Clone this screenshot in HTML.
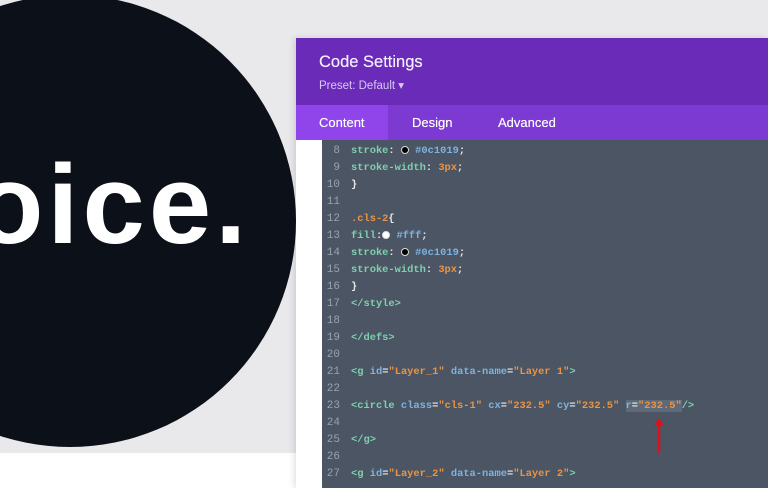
<!DOCTYPE html>
<html><head><meta charset="utf-8"><style>
*{margin:0;padding:0;box-sizing:border-box}
body{width:768px;height:488px;overflow:hidden;background:#fff;position:relative;font-family:"Liberation Sans",sans-serif}
.bg{position:absolute;left:0;top:0;width:768px;height:453px;background:#e9e9ec;overflow:hidden}
.circ{position:absolute;left:-156px;top:-5px;width:452px;height:452px;border-radius:50%;background:#0c1019}
.big{position:absolute;left:-25px;top:149px;font-size:112px;font-weight:bold;color:#fff;letter-spacing:4px;line-height:1}
.panel{position:absolute;left:296px;top:38px;width:472px;height:450px;background:#fff;box-shadow:-2px 0 6px rgba(0,0,0,.12)}
.hdr{height:67px;background:#6a2cb8;padding:14px 0 0 23px;color:#fff}
.hdr h1{font-size:16.5px;font-weight:normal;color:#f4eefc;margin-top:1px;text-shadow:0 0 .4px #fff}
.hdr p{font-size:11.5px;color:#d9c8f2;margin-top:6px}
.tabs{height:35px;background:#7d3ad2;display:flex;font-size:13px;color:#fff;text-shadow:0 0 .4px #fff}
.tabs div{line-height:35px}
.code{position:absolute;left:26px;top:102px;right:0;bottom:0;background:#4b5563;font-family:"Liberation Mono",monospace;font-weight:bold;font-size:10.4px}
.l{position:absolute;left:0;height:17px;line-height:17px;white-space:pre}
.n{position:absolute;width:18px;text-align:right;color:#9aa3ad;font-weight:normal;font-size:11px}
.c{position:absolute;left:29px;color:#e8e8e8}
.k{color:#7ed0b0}.v{color:#7fb3e0}.o{color:#eb9444}.t{color:#7ed0b0}.a{color:#7fb3e0}
.dot{display:inline-block;width:8px;height:8px;border-radius:50%;background:#000;border:1px solid #ddd;vertical-align:-1px}
</style></head><body>
<div class="bg"><div class="circ"></div><div class="big">oice.</div></div>
<div class="panel">
<div class="hdr"><h1>Code Settings</h1><p>Preset: Default ▾</p></div>
<div class="tabs"><div style="background:#8f45ea;width:92px;padding-left:23px">Content</div><div style="padding-left:24px;width:110px">Design</div><div>Advanced</div></div>
<div class="code">
<div class="l" style="top:3px"><span class="n">8</span><span class="c"><span class="k">stroke</span>: <span class="dot"></span> <span class="v">#0c1019</span>;</span></div>
<div class="l" style="top:20px"><span class="n">9</span><span class="c"><span class="k">stroke-width</span>: <span class="o">3px</span>;</span></div>
<div class="l" style="top:37px"><span class="n">10</span><span class="c">}</span></div>
<div class="l" style="top:54px"><span class="n">11</span></div>
<div class="l" style="top:71px"><span class="n">12</span><span class="c"><span class="o">.cls-2</span>{</span></div>
<div class="l" style="top:88px"><span class="n">13</span><span class="c"><span class="k">fill</span>:<span class="dot" style="background:#fff"></span> <span class="v">#fff</span>;</span></div>
<div class="l" style="top:105px"><span class="n">14</span><span class="c"><span class="k">stroke</span>: <span class="dot"></span> <span class="v">#0c1019</span>;</span></div>
<div class="l" style="top:122px"><span class="n">15</span><span class="c"><span class="k">stroke-width</span>: <span class="o">3px</span>;</span></div>
<div class="l" style="top:139px"><span class="n">16</span><span class="c">}</span></div>
<div class="l" style="top:156px"><span class="n">17</span><span class="c"><span class="t">&lt;/style&gt;</span></span></div>
<div class="l" style="top:173px"><span class="n">18</span></div>
<div class="l" style="top:190px"><span class="n">19</span><span class="c"><span class="t">&lt;/defs&gt;</span></span></div>
<div class="l" style="top:207px"><span class="n">20</span></div>
<div class="l" style="top:224px"><span class="n">21</span><span class="c"><span class="t">&lt;g</span> <span class="a">id</span>=<span class="o">"Layer_1"</span> <span class="a">data-name</span>=<span class="o">"Layer 1"</span><span class="t">&gt;</span></span></div>
<div class="l" style="top:241px"><span class="n">22</span></div>
<div class="l" style="top:258px"><span class="n">23</span><span class="c"><span class="t">&lt;circle</span> <span class="a">class</span>=<span class="o">"cls-1"</span> <span class="a">cx</span>=<span class="o">"232.5"</span> <span class="a">cy</span>=<span class="o">"232.5"</span> <span style="background:#5f6a78"><span class="a">r</span>=<span class="o">"232.5"</span></span><span class="t">/&gt;</span></span></div>
<div class="l" style="top:275px"><span class="n">24</span></div>
<div class="l" style="top:292px"><span class="n">25</span><span class="c"><span class="t">&lt;/g&gt;</span></span></div>
<div class="l" style="top:309px"><span class="n">26</span></div>
<div class="l" style="top:326px"><span class="n">27</span><span class="c"><span class="t">&lt;g</span> <span class="a">id</span>=<span class="o">"Layer_2"</span> <span class="a">data-name</span>=<span class="o">"Layer 2"</span><span class="t">&gt;</span></span></div>
</div>
</div>
<svg style="position:absolute;left:652px;top:416px" width="14" height="38"><path d="M7 3 V37" stroke="#e0101a" stroke-width="2.5"/><path d="M2 10 L7 2 L12 10 Z" fill="#e0101a"/></svg>
</body></html>
